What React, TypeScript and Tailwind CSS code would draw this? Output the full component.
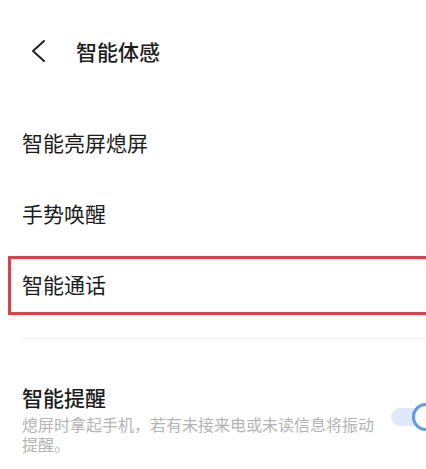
import React from "react";

const font = { fontFamily: '"Noto Sans CJK SC", "Noto Sans", sans-serif' };

export default function App() {
  return (
    <div
      className="w-[426px] h-[469px] overflow-hidden bg-white text-[#1c1c1c]"
      style={font}
    >
      <div className="h-[102px] flex items-center pl-[30px]">
        <svg width="16" height="24" viewBox="0 0 16 24" className="shrink-0">
          <polyline
            points="14,2 3,12 14,22"
            fill="none"
            stroke="#222"
            strokeWidth="2"
            strokeLinecap="round"
            strokeLinejoin="round"
          />
        </svg>
        <span className="ml-[30px] text-[21px] font-medium leading-none">智能体感</span>
      </div>
      <div className="h-[5px]" />
      <div className="h-[71px] flex items-center pl-[22px] text-[21px] leading-none">
        智能亮屏熄屏
      </div>
      <div className="h-[71px] flex items-center pl-[22px] text-[21px] leading-none">
        手势唤醒
      </div>
      <div className="relative h-[71px] flex items-center pl-[22px] text-[21px] leading-none">
        <div className="absolute top-[7px] bottom-[5px] left-[8px] -right-[10px] border-[3px] border-[#d9434a]" />
        智能通话
      </div>
      <div className="mt-[18px] ml-[22px] h-px bg-[#f2f2f4]" />
      <div className="flex items-start pl-[22px] mt-[44px]">
        <div className="w-[356px] shrink-0">
          <div className="text-[21px] leading-[28px] font-medium">智能提醒</div>
          <div className="mt-[3px] text-[16px] leading-[20px] text-[#b4b4b4]">
            熄屏时拿起手机，若有未接来电或未读信息将振动提醒。
          </div>
        </div>
        <div className="relative shrink-0 ml-[13px] mt-[21px] w-[52px] h-[26px]">
          <div className="absolute left-0 right-0 top-[4px] h-[18px] rounded-full bg-[#dfe9fb]" />
          <div className="absolute left-[21px] top-[-1px] w-[28px] h-[28px] rounded-full bg-white border-[3px] border-[#5b9cea]" />
        </div>
      </div>
    </div>
  );
}
